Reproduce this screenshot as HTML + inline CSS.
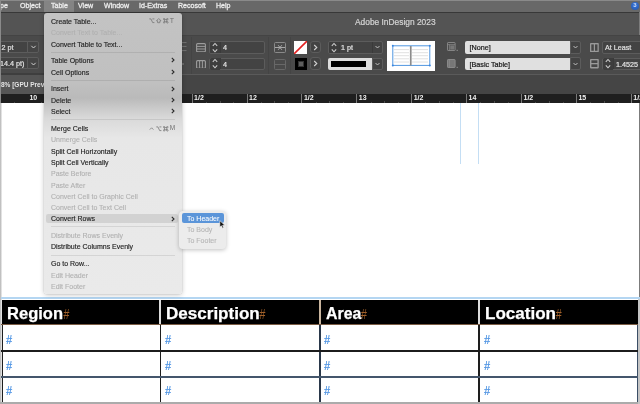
<!DOCTYPE html>
<html><head><meta charset="utf-8">
<style>
*{margin:0;padding:0;box-sizing:border-box}
#root{position:absolute;left:0;top:0;width:640px;height:404px;overflow:hidden;will-change:transform}
html,body{width:640px;height:404px;overflow:hidden;background:#fff;font-family:"Liberation Sans",sans-serif}
.a{position:absolute}
#menubar{left:0;top:0;width:640px;height:12px;background:#686868;border-top:1px solid #8a8a8a}
#menubar span{position:absolute;top:0.3px;font-size:7.05px;color:#ececec;line-height:10px;-webkit-text-stroke:0.3px currentColor}
#titlebar{left:0;top:11.6px;width:640px;height:24px;background:#545454;border-top:1.4px solid #383838}
#panel{left:0;top:35.4px;width:640px;height:38.6px;background:#4a4a4a;border-top:1.6px solid #444}
#status{left:0;top:74.4px;width:640px;height:19.4px;background:#454545}
#ruler{left:1px;top:93.6px;width:639px;height:9.5px;background:#1f1f1f}
.fld{position:absolute;background:#434343;border:1px solid #5c5c5c;border-radius:2px}
.txt{position:absolute;font-size:7.2px;color:#e2e2e2;line-height:9px;white-space:nowrap;-webkit-text-stroke:0.2px currentColor}
.rl{position:absolute;top:93.4px;font-size:7px;font-weight:bold;color:#f2f2f2;line-height:9px}
.tk{position:absolute;top:93.6px;width:1px;height:9.5px;background:#7a7a7a}
.stk{position:absolute;top:100px;width:1px;height:3px;background:#4a4a4a}
#menu{left:43.5px;top:13px;width:138.3px;height:281px;border-radius:3px;
 background:linear-gradient(#c3c3c3 0px,#c0c0c0 70px,#bababa 85px,#d9d9d9 105px,#e7e7e7 125px,#eaeaea 281px);
 box-shadow:0 1px 5px rgba(0,0,0,.22),0 0 0 0.5px rgba(0,0,0,.08)}
.mi{position:absolute;left:51px;font-size:7px;color:#262626;line-height:9px;white-space:nowrap;-webkit-text-stroke:0.15px currentColor}
.mi.d{color:#b0b0b0;-webkit-text-stroke:0.1px currentColor}
.mi.sc{color:#707070;-webkit-text-stroke:0.1px currentColor;letter-spacing:1.1px;margin-top:-0.6px}
.sep{position:absolute;left:50.5px;width:124.5px;height:1px;background:rgba(0,0,0,0.085)}
.arr{position:absolute;left:128px;font-size:7px;color:#333}

.th{position:absolute;top:304px;-webkit-text-stroke:0.25px #fff;font-size:16.4px;font-weight:bold;color:#fff;line-height:19px;white-space:nowrap}
.oh{display:inline-block;font-size:15.5px;line-height:17px;font-weight:normal;color:#a0602a;transform-origin:0 100%;width:6.2px;-webkit-text-stroke:0}
.bh{position:absolute;font-size:12.5px;font-style:italic;color:#3f8ae0;-webkit-text-stroke:0.2px #3f8ae0;line-height:11px;transform:scaleX(0.85);transform-origin:0 0}
#sub{left:179.2px;top:211px;width:47.3px;height:38px;border-radius:4px;background:#ececec;box-shadow:0 1px 4px rgba(0,0,0,.25)}

</style></head><body><div id="root">
<div id="menubar" class="a">
 <div style="position:absolute;left:43.6px;top:0px;width:30.9px;height:10.8px;background:#848484"></div>
 <span style="left:0px">pe</span>
 <span style="left:20px">Object</span>
 <span style="left:51px">Table</span>
 <span style="left:78px">View</span>
 <span style="left:104px">Window</span>
 <span style="left:139px">Id-Extras</span>
 <span style="left:178px">Recosoft</span>
 <span style="left:216px">Help</span>
</div>
<div id="titlebar" class="a"></div>
<div class="a txt" style="left:355px;top:18px;font-size:8.4px;color:#d4d4d4;-webkit-text-stroke:0.2px #d4d4d4">Adobe InDesign 2023</div>
<div class="a" style="left:630.8px;top:1.9px;width:8px;height:8px;border-radius:50%;background:radial-gradient(circle at 50% 40%,#3a78d8,#2254ad)"></div>
<div class="a" style="left:633.2px;top:2.4px;font-size:6px;line-height:7px;color:#c8d8f4;font-weight:bold">3</div>
<div class="a" style="left:638.6px;top:12px;width:1.4px;height:286px;background:#7c7c7c"></div>
<div id="panel" class="a"></div>

<!-- control panel contents -->
<div class="fld" style="left:-2px;top:41px;width:30px;height:12px;border-radius:0 0 0 0"></div>
<div class="fld" style="left:27px;top:41px;width:12px;height:12px;border-radius:0 2px 2px 0;background:#454545"></div>
<div class="txt" style="left:1.5px;top:42.5px">2 pt</div>
<svg class="a" style="left:30px;top:44px" width="7" height="6" viewBox="0 0 7 6"><path d="M1.3 1.8L3.5 4L5.7 1.8" fill="none" stroke="#cfcfcf" stroke-width="1"/></svg>
<div class="fld" style="left:-2px;top:57.3px;width:30px;height:12px;border-radius:0"></div>
<div class="fld" style="left:27px;top:57.3px;width:12px;height:12px;border-radius:0 2px 2px 0;background:#454545"></div>
<div class="txt" style="left:0px;top:59px">14.4 pt)</div>
<svg class="a" style="left:30px;top:60.5px" width="7" height="6" viewBox="0 0 7 6"><path d="M1.3 1.8L3.5 4L5.7 1.8" fill="none" stroke="#cfcfcf" stroke-width="1"/></svg>

<svg class="a" style="left:181px;top:41px" width="7" height="11" viewBox="0 0 7 11"><path d="M1 1.6H5.5M1 5.4H5.5M1 9.6H5.5" stroke="#7a7a7a" stroke-width="0.9"/></svg>
<div class="a" style="left:181.5px;top:63px;width:2px;height:2px;background:#6a6a6a"></div>
<div class="a" style="left:191.3px;top:37px;width:0.8px;height:37px;background:#444"></div>
<div class="a" style="left:268px;top:37px;width:0.8px;height:37px;background:#444"></div>
<div class="a" style="left:290.3px;top:37px;width:0.8px;height:37px;background:#444"></div>
<!-- rows/cols icons -->
<svg class="a" style="left:196px;top:42.7px" width="10" height="9.4" viewBox="0 0 10 9.4"><rect x="0.6" y="0.6" width="8.8" height="8.2" rx="1" fill="none" stroke="#9c9c9c" stroke-width="1.1"/><path d="M0.6 3.4H9.4M0.6 6H9.4" stroke="#9c9c9c" stroke-width="1"/></svg>
<svg class="a" style="left:196px;top:59.7px" width="10" height="8.8" viewBox="0 0 10 8.8"><rect x="0.6" y="0.6" width="8.8" height="7.6" rx="1" fill="none" stroke="#9c9c9c" stroke-width="1.1"/><path d="M3.6 0.6V8.2M6.4 0.6V8.2" stroke="#9c9c9c" stroke-width="1"/></svg>
<div class="fld" style="left:209px;top:40.8px;width:56px;height:12.8px"></div>
<div class="a" style="left:220px;top:41.5px;width:1px;height:11px;background:#3a3a3a"></div>
<div class="a" style="left:209.7px;top:41.5px;width:10.8px;height:11.4px;background:#3d3d3d;border-radius:1.5px 0 0 1.5px"></div><svg class="a" style="left:210.0px;top:41.5px" width="10" height="11" viewBox="0 0 10 11"><path d="M2.8 3.9L5 1.5L7.2 3.9M2.8 7.4L5 9.8L7.2 7.4" fill="none" stroke="#cdcdcd" stroke-width="1.05"/></svg>
<div class="txt" style="left:223px;top:43px">4</div>
<div class="fld" style="left:209px;top:57.5px;width:56px;height:12.8px"></div>
<div class="a" style="left:220px;top:58.2px;width:1px;height:11px;background:#3a3a3a"></div>
<div class="a" style="left:209.7px;top:58.2px;width:10.8px;height:11.4px;background:#3d3d3d;border-radius:1.5px 0 0 1.5px"></div><svg class="a" style="left:210.0px;top:58.2px" width="10" height="11" viewBox="0 0 10 11"><path d="M2.8 3.9L5 1.5L7.2 3.9M2.8 7.4L5 9.8L7.2 7.4" fill="none" stroke="#cdcdcd" stroke-width="1.05"/></svg>
<div class="txt" style="left:223px;top:59.7px">4</div>

<!-- merge / split icons -->
<svg class="a" style="left:273.5px;top:41.5px" width="12" height="11" viewBox="0 0 12 11"><rect x="0.5" y="0.5" width="11" height="10" rx="1" fill="none" stroke="#8a8a8a"/><path d="M1 5.5H11M4.2 3.2L7.8 7.8M7.8 3.2L4.2 7.8" stroke="#a8a8a8" stroke-width="1"/></svg>
<svg class="a" style="left:273.5px;top:58.7px" width="12" height="11" viewBox="0 0 12 11"><rect x="0.5" y="0.5" width="11" height="10" rx="1" fill="none" stroke="#686868"/><path d="M1 5.5H11" stroke="#686868"/></svg>

<!-- swatches -->
<svg class="a" style="left:294px;top:40.6px" width="13" height="13" viewBox="0 0 13 13"><rect width="13" height="13" fill="#fff"/><path d="M0 13L13 0" stroke="#e42222" stroke-width="1.6"/></svg>
<div class="a" style="left:294.5px;top:57.5px;width:12.5px;height:12.5px;background:#000"></div>
<div class="a" style="left:297.8px;top:60.8px;width:5.8px;height:6.2px;background:#5e5e5e;border:0.6px solid #333"></div>
<div class="fld" style="left:310px;top:40.6px;width:10.8px;height:12.8px;border-radius:3px"></div>
<svg class="a" style="left:313px;top:43.5px" width="5" height="7" viewBox="0 0 5 7"><path d="M1.2 1L3.8 3.5L1.2 6" fill="none" stroke="#d0d0d0" stroke-width="1.1"/></svg>
<div class="fld" style="left:310px;top:57.3px;width:10.8px;height:12.8px;border-radius:3px"></div>
<svg class="a" style="left:313px;top:60.2px" width="5" height="7" viewBox="0 0 5 7"><path d="M1.2 1L3.8 3.5L1.2 6" fill="none" stroke="#d0d0d0" stroke-width="1.1"/></svg>

<!-- stroke weight -->
<div class="fld" style="left:328px;top:40.8px;width:55px;height:12.8px"></div>
<div class="a" style="left:339px;top:41.5px;width:1px;height:11px;background:#3a3a3a"></div>
<div class="a" style="left:371.5px;top:41.5px;width:1px;height:11px;background:#3a3a3a"></div>
<div class="a" style="left:328.7px;top:41.5px;width:10.8px;height:11.4px;background:#3d3d3d;border-radius:1.5px 0 0 1.5px"></div><svg class="a" style="left:329.0px;top:41.5px" width="10" height="11" viewBox="0 0 10 11"><path d="M2.8 3.9L5 1.5L7.2 3.9M2.8 7.4L5 9.8L7.2 7.4" fill="none" stroke="#cdcdcd" stroke-width="1.05"/></svg>
<div class="txt" style="left:341px;top:43px">1 pt</div>
<svg class="a" style="left:374px;top:44px" width="7" height="6" viewBox="0 0 7 6"><path d="M1.5 2L3.5 4L5.5 2" fill="none" stroke="#c8c8c8" stroke-width="0.9"/></svg>
<div class="a" style="left:328.3px;top:57.7px;width:43.5px;height:12.5px;background:#dedede;border-radius:2px 0 0 2px"></div>
<div class="a" style="left:331px;top:61.2px;width:35px;height:5.4px;background:#000"></div>
<div class="fld" style="left:371.5px;top:57.5px;width:11.3px;height:12.8px;border-radius:0 2px 2px 0"></div>
<svg class="a" style="left:374px;top:60.7px" width="7" height="6" viewBox="0 0 7 6"><path d="M1.5 2L3.5 4L5.5 2" fill="none" stroke="#c8c8c8" stroke-width="0.9"/></svg>

<!-- proxy preview -->
<svg class="a" style="left:387px;top:40.8px" width="48" height="30" viewBox="0 0 48 30">
<rect width="48" height="30" fill="#fff"/>
<g stroke="#d6d6d6" stroke-width="0.75"><path d="M7 8.6H22M7 11.7H22M7 14.7H22M7 17.8H22M7 21H22M25 8.6H41M25 11.7H41M25 14.7H41M25 17.8H41M25 21H41"/></g>
<rect x="5.8" y="4.8" width="37" height="19.6" fill="none" stroke="#5096e0" stroke-width="1"/>
<rect x="22.9" y="5" width="1.7" height="19.5" fill="#8c8c8c"/>
<g fill="#3a86e0"><circle cx="5.8" cy="4.8" r="1"/><circle cx="42.8" cy="4.8" r="1"/><circle cx="5.8" cy="24.4" r="1"/><circle cx="42.8" cy="24.4" r="1"/></g>
</svg>

<!-- cell style icons -->
<svg class="a" style="left:446.8px;top:42.3px" width="12" height="10" viewBox="0 0 12 10"><rect x="0.5" y="0.5" width="7.6" height="8" rx="0.6" fill="none" stroke="#8c8c8c" stroke-width="0.9"/><path d="M0.5 2.6H8.1M2.4 2.6V8.5" stroke="#8c8c8c" stroke-width="0.7"/><rect x="3.2" y="3.4" width="4" height="4.2" fill="#777"/><rect x="9.6" y="7.8" width="1.2" height="1.2" fill="#8a8a8a"/></svg>
<svg class="a" style="left:446.8px;top:59.2px" width="12" height="10" viewBox="0 0 12 10"><rect x="0.5" y="0.5" width="7.6" height="8" rx="0.6" fill="#777" stroke="#8c8c8c" stroke-width="0.9"/><path d="M2.4 0.5V8.5" stroke="#8c8c8c" stroke-width="0.7"/><rect x="9.6" y="7.8" width="1.2" height="1.2" fill="#8a8a8a"/></svg>
<div class="a" style="left:465px;top:40.6px;width:105px;height:13.2px;background:#e0e0e0;border-radius:2px 0 0 2px"></div>
<div class="txt" style="left:469.5px;top:43px;color:#161616">[None]</div>
<div class="fld" style="left:570px;top:40.6px;width:11px;height:13.2px;border-radius:0 2px 2px 0"></div>
<svg class="a" style="left:572px;top:44px" width="7" height="6" viewBox="0 0 7 6"><path d="M1.5 2L3.5 4L5.5 2" fill="none" stroke="#c8c8c8" stroke-width="0.9"/></svg>
<div class="a" style="left:465px;top:57.5px;width:105px;height:12.8px;background:#e0e0e0;border-radius:2px 0 0 2px"></div>
<div class="txt" style="left:469.5px;top:59.5px;color:#161616">[Basic Table]</div>
<div class="fld" style="left:570px;top:57.3px;width:11px;height:13px;border-radius:0 2px 2px 0"></div>
<svg class="a" style="left:572px;top:60.7px" width="7" height="6" viewBox="0 0 7 6"><path d="M1.5 2L3.5 4L5.5 2" fill="none" stroke="#c8c8c8" stroke-width="0.9"/></svg>

<!-- row height icons -->
<svg class="a" style="left:589.8px;top:42.8px" width="8.8" height="9.2" viewBox="0 0 8.8 9.2"><rect width="8.8" height="9.2" rx="0.8" fill="#9a9a9a"/><rect x="1.3" y="1.4" width="2.5" height="6.4" fill="#474747"/><rect x="5" y="1.4" width="2.5" height="6.4" fill="#474747"/></svg>
<svg class="a" style="left:589.8px;top:59.3px" width="8.8" height="9.4" viewBox="0 0 8.8 9.4"><rect width="8.8" height="9.4" rx="0.8" fill="#9a9a9a"/><rect x="1.4" y="1.3" width="6" height="2.7" fill="#474747"/><rect x="1.4" y="5.3" width="6" height="2.7" fill="#474747"/></svg>
<div class="fld" style="left:602px;top:40.8px;width:42px;height:12.8px"></div>
<div class="txt" style="left:605px;top:43px">At Least</div>
<div class="fld" style="left:602px;top:57.5px;width:42px;height:12.8px"></div>
<div class="a" style="left:612.8px;top:58.2px;width:1px;height:11px;background:#3a3a3a"></div>
<div class="a" style="left:602.7px;top:58.2px;width:10.8px;height:11.4px;background:#3d3d3d;border-radius:1.5px 0 0 1.5px"></div><svg class="a" style="left:603.0px;top:58.2px" width="10" height="11" viewBox="0 0 10 11"><path d="M2.8 3.9L5 1.5L7.2 3.9M2.8 7.4L5 9.8L7.2 7.4" fill="none" stroke="#cdcdcd" stroke-width="1.05"/></svg>
<div class="txt" style="left:616px;top:59.7px">1.4525</div>
<div id="status" class="a"></div>
<div class="a" style="left:0;top:73.5px;width:640px;height:1px;background:#5a5a5a"></div>
<div class="a" style="left:1px;top:73.3px;width:120px;height:1.4px;background:#3e3e3e"></div>
<div class="a" style="left:1px;top:74.7px;width:120px;height:19px;background:#555"></div>
<div class="a txt" style="left:1px;top:79.8px;font-size:6.5px;font-weight:bold;color:#e4e4e4;-webkit-text-stroke:0">8% [GPU Preview]</div>
<div id="ruler" class="a"></div>
<div class="rl" style="left:29.4px">10</div>
<div class="tk" style="left:81.8px"></div><div class="rl" style="left:84.3px">1/2</div>
<div class="tk" style="left:136.7px"></div><div class="rl" style="left:139.2px">11</div>
<div class="tk" style="left:191.6px"></div><div class="rl" style="left:194.1px">1/2</div>
<div class="tk" style="left:246.5px"></div><div class="rl" style="left:249.0px">12</div>
<div class="tk" style="left:301.4px"></div><div class="rl" style="left:303.9px">1/2</div>
<div class="tk" style="left:356.3px"></div><div class="rl" style="left:358.8px">13</div>
<div class="tk" style="left:411.2px"></div><div class="rl" style="left:413.7px">1/2</div>
<div class="tk" style="left:466.1px"></div><div class="rl" style="left:468.6px">14</div>
<div class="tk" style="left:521.0px"></div><div class="rl" style="left:523.5px">1/2</div>
<div class="tk" style="left:575.9px"></div><div class="rl" style="left:578.4px">15</div>
<div class="tk" style="left:630.8px"></div><div class="rl" style="left:633.3px">1/2</div>
<div class="stk" style="left:13.7px;top:101.5px;height:1.5px"></div>
<div class="stk" style="left:41.1px;top:101.5px;height:1.5px"></div>
<div class="stk" style="left:54.8px;top:101px;height:2px"></div>
<div class="stk" style="left:68.6px;top:101.5px;height:1.5px"></div>
<div class="stk" style="left:96.0px;top:101.5px;height:1.5px"></div>
<div class="stk" style="left:109.8px;top:101px;height:2px"></div>
<div class="stk" style="left:123.5px;top:101.5px;height:1.5px"></div>
<div class="stk" style="left:150.9px;top:101.5px;height:1.5px"></div>
<div class="stk" style="left:164.7px;top:101px;height:2px"></div>
<div class="stk" style="left:178.4px;top:101.5px;height:1.5px"></div>
<div class="stk" style="left:205.8px;top:101.5px;height:1.5px"></div>
<div class="stk" style="left:219.6px;top:101px;height:2px"></div>
<div class="stk" style="left:233.3px;top:101.5px;height:1.5px"></div>
<div class="stk" style="left:260.7px;top:101.5px;height:1.5px"></div>
<div class="stk" style="left:274.4px;top:101px;height:2px"></div>
<div class="stk" style="left:288.2px;top:101.5px;height:1.5px"></div>
<div class="stk" style="left:315.6px;top:101.5px;height:1.5px"></div>
<div class="stk" style="left:329.3px;top:101px;height:2px"></div>
<div class="stk" style="left:343.1px;top:101.5px;height:1.5px"></div>
<div class="stk" style="left:370.5px;top:101.5px;height:1.5px"></div>
<div class="stk" style="left:384.2px;top:101px;height:2px"></div>
<div class="stk" style="left:398.0px;top:101.5px;height:1.5px"></div>
<div class="stk" style="left:425.4px;top:101.5px;height:1.5px"></div>
<div class="stk" style="left:439.1px;top:101px;height:2px"></div>
<div class="stk" style="left:452.9px;top:101.5px;height:1.5px"></div>
<div class="stk" style="left:480.3px;top:101.5px;height:1.5px"></div>
<div class="stk" style="left:494.0px;top:101px;height:2px"></div>
<div class="stk" style="left:507.8px;top:101.5px;height:1.5px"></div>
<div class="stk" style="left:535.2px;top:101.5px;height:1.5px"></div>
<div class="stk" style="left:548.9px;top:101px;height:2px"></div>
<div class="stk" style="left:562.7px;top:101.5px;height:1.5px"></div>
<div class="stk" style="left:590.1px;top:101.5px;height:1.5px"></div>
<div class="stk" style="left:603.8px;top:101px;height:2px"></div>
<div class="stk" style="left:617.6px;top:101.5px;height:1.5px"></div>
<div class="a" style="left:0;top:0;width:1px;height:103px;background:#8a8a8a"></div>
<div class="a" style="left:0;top:103px;width:2px;height:301px;background:linear-gradient(90deg,#bdbdbd 0,#c4c4c4 50%,#fff 100%)"></div>

<!-- canvas guides -->
<div class="a" style="left:460px;top:102.8px;width:1px;height:61px;background:#c4def4"></div>
<div class="a" style="left:478.4px;top:102.8px;width:1px;height:61px;background:#c4def4"></div>

<!-- table -->
<div class="a" style="left:1px;top:297.4px;width:639px;height:1.8px;background:#b4d6f2"></div>
<div class="a" style="left:1.5px;top:299.8px;width:636.5px;height:24.2px;background:#000"></div>
<div class="a" style="left:1px;top:323.8px;width:637px;height:1px;background:#7a5c44"></div>
<div class="th" style="left:7.4px;transform:scaleX(1.01);transform-origin:0 0">Region<span class="oh" style="transform:scaleX(0.673)">#</span></div>
<div class="th" style="left:166.4px;transform:scaleX(1.04);transform-origin:0 0">Description<span class="oh" style="transform:scaleX(0.654)">#</span></div>
<div class="th" style="left:326.1px;transform:scaleX(0.97);transform-origin:0 0">Area<span class="oh" style="transform:scaleX(0.701)">#</span></div>
<div class="th" style="left:484.9px;transform:scaleX(1.04);transform-origin:0 0">Location<span class="oh" style="transform:scaleX(0.654)">#</span></div>
<div class="a" style="left:159.2px;top:299.5px;width:2px;height:24.5px;background:#dcdcdc"></div>
<div class="a" style="left:318.8px;top:299.5px;width:2px;height:24.5px;background:#c9b59e"></div>
<div class="a" style="left:478.4px;top:299.5px;width:2px;height:24.5px;background:#dddddd"></div>
<div class="a" style="left:1.5px;top:324.5px;width:1.4px;height:77.5px;background:#1e1e1e"></div>
<div class="a" style="left:159.7px;top:324.5px;width:1.8px;height:77.5px;background:#1e1e1e"></div>
<div class="a" style="left:318.9px;top:324.5px;width:1.8px;height:77.5px;background:#2a384a"></div>
<div class="a" style="left:478.4px;top:324.5px;width:1.8px;height:77.5px;background:#1e1e1e"></div>
<div class="a" style="left:636.9px;top:324.5px;width:1.8px;height:77.5px;background:#3a4e66"></div>
<div class="a" style="left:1px;top:350.1px;width:637px;height:1.5px;background:#1c1c1c"></div>
<div class="a" style="left:1px;top:376.2px;width:637px;height:1.4px;background:#44566c"></div>
<div class="a" style="left:0;top:401.6px;width:640px;height:2.4px;background:#ababab"></div>
<div class="a" style="left:638.3px;top:299px;width:1.7px;height:105px;background:#c4c4c4"></div>
<div class="bh" style="left:6.2px;top:335.2px">#</div>
<div class="bh" style="left:6.2px;top:361.0px">#</div>
<div class="bh" style="left:6.2px;top:386.4px">#</div>
<div class="bh" style="left:164.9px;top:335.2px">#</div>
<div class="bh" style="left:164.9px;top:361.0px">#</div>
<div class="bh" style="left:164.9px;top:386.4px">#</div>
<div class="bh" style="left:324.1px;top:335.2px">#</div>
<div class="bh" style="left:324.1px;top:361.0px">#</div>
<div class="bh" style="left:324.1px;top:386.4px">#</div>
<div class="bh" style="left:483.6px;top:335.2px">#</div>
<div class="bh" style="left:483.6px;top:361.0px">#</div>
<div class="bh" style="left:483.6px;top:386.4px">#</div>
<div id="menu" class="a"></div>
<div class="a" style="left:46px;top:214.3px;width:131.5px;height:9px;background:#d2d2d2;border-radius:2px"></div>
<div class="mi" style="top:16.5px">Create Table...</div>
<svg class="a" style="left:149.2px;top:18.3px" width="6" height="6" viewBox="0 0 6 6"><path d="M0.3 0.9H1.9L3.7 4.6H5.4M3.4 0.9H5.4" fill="none" stroke="#707070" stroke-width="0.75"/></svg><svg class="a" style="left:156px;top:18.3px" width="6" height="6" viewBox="0 0 6 6"><path d="M2.75 0.5L0.5 2.8H1.6V4.7H3.9V2.8H5Z" fill="none" stroke="#707070" stroke-width="0.7" stroke-linejoin="round"/></svg><svg class="a" style="left:162.8px;top:18.3px" width="6" height="6" viewBox="0 0 6 6"><g fill="none" stroke="#707070" stroke-width="0.65"><rect x="1.7" y="1.7" width="2.1" height="2.1"/><circle cx="1.1" cy="1.1" r="0.75"/><circle cx="4.4" cy="1.1" r="0.75"/><circle cx="1.1" cy="4.4" r="0.75"/><circle cx="4.4" cy="4.4" r="0.75"/></g></svg><div class="a" style="left:169.8px;top:16.6px;font-size:7px;line-height:7px;color:#707070">T</div>
<div class="mi d" style="top:28.0px">Convert Text to Table...</div>
<div class="mi" style="top:39.5px">Convert Table to Text...</div>
<div class="sep" style="top:52.1px"></div>
<div class="mi" style="top:55.9px">Table Options</div>
<svg class="a" style="left:171px;top:57.4px" width="4" height="6" viewBox="0 0 4 6"><path d="M0.8 0.8L3 3L0.8 5.2" fill="none" stroke="#2a2a2a" stroke-width="1.1"/></svg>
<div class="mi" style="top:67.5px">Cell Options</div>
<svg class="a" style="left:171px;top:69px" width="4" height="6" viewBox="0 0 4 6"><path d="M0.8 0.8L3 3L0.8 5.2" fill="none" stroke="#2a2a2a" stroke-width="1.1"/></svg>
<div class="sep" style="top:79.5px"></div>
<div class="mi" style="top:84.4px">Insert</div>
<svg class="a" style="left:171px;top:85.9px" width="4" height="6" viewBox="0 0 4 6"><path d="M0.8 0.8L3 3L0.8 5.2" fill="none" stroke="#2a2a2a" stroke-width="1.1"/></svg>
<div class="mi" style="top:95.8px">Delete</div>
<svg class="a" style="left:171px;top:97.3px" width="4" height="6" viewBox="0 0 4 6"><path d="M0.8 0.8L3 3L0.8 5.2" fill="none" stroke="#2a2a2a" stroke-width="1.1"/></svg>
<div class="mi" style="top:106.9px">Select</div>
<svg class="a" style="left:171px;top:108.4px" width="4" height="6" viewBox="0 0 4 6"><path d="M0.8 0.8L3 3L0.8 5.2" fill="none" stroke="#2a2a2a" stroke-width="1.1"/></svg>
<div class="sep" style="top:119.3px"></div>
<div class="mi" style="top:124.0px">Merge Cells</div>
<svg class="a" style="left:149px;top:126.7px" width="6" height="6" viewBox="0 0 6 6"><path d="M0.8 2.6L2.6 0.8L4.4 2.6" fill="none" stroke="#707070" stroke-width="0.75"/></svg><svg class="a" style="left:155.5px;top:125.8px" width="6" height="6" viewBox="0 0 6 6"><path d="M0.3 0.9H1.9L3.7 4.6H5.4M3.4 0.9H5.4" fill="none" stroke="#707070" stroke-width="0.75"/></svg><svg class="a" style="left:162.5px;top:125.8px" width="6" height="6" viewBox="0 0 6 6"><g fill="none" stroke="#707070" stroke-width="0.65"><rect x="1.7" y="1.7" width="2.1" height="2.1"/><circle cx="1.1" cy="1.1" r="0.75"/><circle cx="4.4" cy="1.1" r="0.75"/><circle cx="1.1" cy="4.4" r="0.75"/><circle cx="4.4" cy="4.4" r="0.75"/></g></svg><div class="a" style="left:169.8px;top:124.4px;font-size:6.5px;line-height:7px;color:#707070">M</div>
<div class="mi d" style="top:135.3px">Unmerge Cells</div>
<div class="mi" style="top:146.5px">Split Cell Horizontally</div>
<div class="mi" style="top:157.7px">Split Cell Vertically</div>
<div class="mi d" style="top:169.2px">Paste Before</div>
<div class="mi d" style="top:180.7px">Paste After</div>
<div class="mi d" style="top:192.0px">Convert Cell to Graphic Cell</div>
<div class="mi d" style="top:203.1px">Convert Cell to Text Cell</div>
<div class="mi" style="top:214.1px">Convert Rows</div>
<svg class="a" style="left:171px;top:215.6px" width="4" height="6" viewBox="0 0 4 6"><path d="M0.8 0.8L3 3L0.8 5.2" fill="none" stroke="#2a2a2a" stroke-width="1.1"/></svg>
<div class="sep" style="top:225.8px"></div>
<div class="mi d" style="top:230.8px">Distribute Rows Evenly</div>
<div class="mi" style="top:242.2px">Distribute Columns Evenly</div>
<div class="sep" style="top:254.5px"></div>
<div class="mi" style="top:259.3px">Go to Row...</div>
<div class="mi d" style="top:270.5px">Edit Header</div>
<div class="mi d" style="top:281.7px">Edit Footer</div>

<div id="sub" class="a"></div>
<div class="a" style="left:181.6px;top:213px;width:42.4px;height:10px;background:#5b95d9;border-radius:2px"></div>
<div class="mi" style="left:187px;top:214px;color:#fff;-webkit-text-stroke:0.05px #fff">To Header</div>
<div class="mi d" style="left:187px;top:225.2px;color:#b6b6b6">To Body</div>
<div class="mi d" style="left:187px;top:236.4px;color:#b6b6b6">To Footer</div>
<svg class="a" style="left:218.7px;top:219.6px" width="7" height="9" viewBox="0 0 7 9"><path d="M0.8 0.6L0.8 7.2L2.4 5.8L3.6 8.3L4.7 7.8L3.6 5.4L5.8 5.3Z" fill="#111" stroke="#fff" stroke-width="0.6"/></svg>
</div></body></html>
